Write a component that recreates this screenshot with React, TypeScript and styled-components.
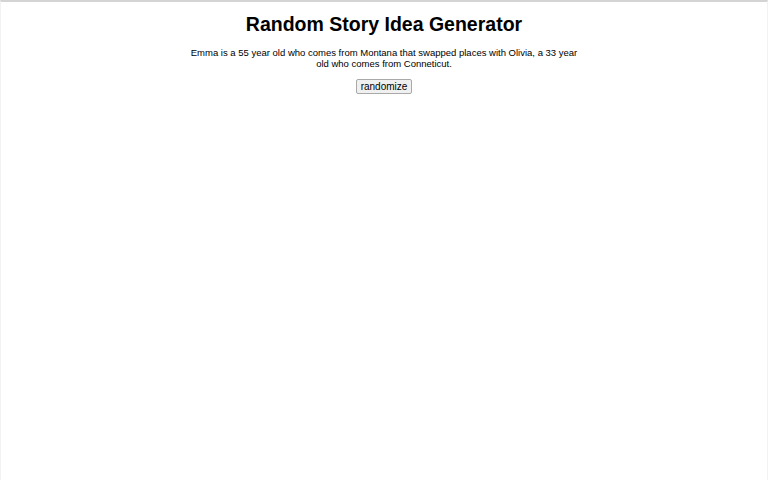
import React, { useState } from "react";
import styled, { createGlobalStyle } from "styled-components";

const GlobalStyle = createGlobalStyle`
  html, body {
    margin: 0;
    padding: 0;
    background: #fff;
  }
  body {
    font-family: "Liberation Sans", Arial, sans-serif;
  }
`;

const Frame = styled.div`
  box-sizing: border-box;
  height: 480px;
  border-top: 2px solid #d4d4d4;
  border-left: 1px solid #f2f2f2;
  border-right: 1px solid #f2f2f2;
  display: flex;
  flex-direction: column;
  align-items: center;
`;

const Title = styled.h1`
  margin: 11px 0 0;
  font-size: 19.5px;
  font-weight: bold;
  color: #000;
`;

const Story = styled.p`
  margin: 11px 0 0;
  width: 400px;
  font-size: 9.5px;
  line-height: 11px;
  text-align: center;
  color: #000;
`;

const Button = styled.button`
  margin-top: 10px;
  font-family: "Liberation Sans", Arial, sans-serif;
  font-size: 10px;
  padding: 1px 4px;
  color: #000;
  background: #f0f0f0;
  border: 1px solid #a9a9a9;
  border-radius: 2px;
`;

const names = ["Emma", "Olivia", "Liam", "Noah", "Ava", "Mason"];
const states = ["Montana", "Conneticut", "Texas", "Ohio", "Oregon", "Maine"];

const pick = <T,>(list: T[]) => list[Math.floor(Math.random() * list.length)];

export default function App() {
  const [story, setStory] = useState(
    "Emma is a 55 year old who comes from Montana that swapped places with Olivia, a 33 year old who comes from Conneticut."
  );

  const randomize = () => {
    const a = Math.floor(Math.random() * 60) + 18;
    const b = Math.floor(Math.random() * 60) + 18;
    setStory(
      `${pick(names)} is a ${a} year old who comes from ${pick(states)} that swapped places with ${pick(names)}, a ${b} year old who comes from ${pick(states)}.`
    );
  };

  return (
    <>
      <GlobalStyle />
      <Frame>
        <Title>Random Story Idea Generator</Title>
        <Story>{story}</Story>
        <Button onClick={randomize}>randomize</Button>
      </Frame>
    </>
  );
}
